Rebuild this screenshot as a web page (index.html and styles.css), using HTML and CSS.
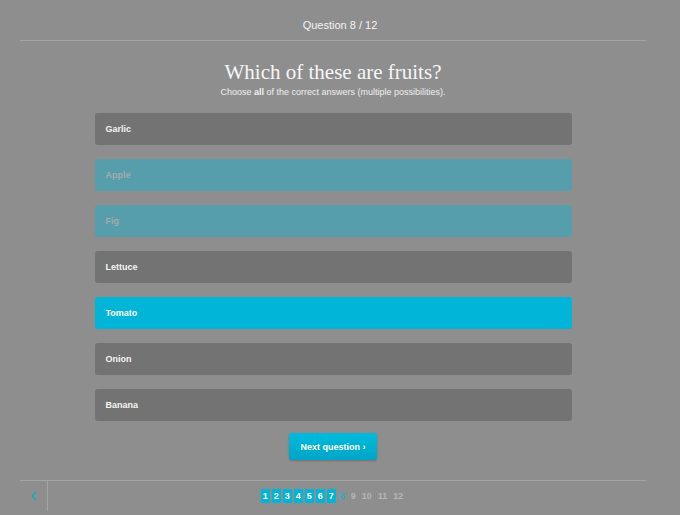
FILE: index.html
```html
<!DOCTYPE html>
<html lang="en">
<head>
<meta charset="UTF-8">
<meta name="viewport" content="width=device-width, initial-scale=1.0">
<title>Quiz - Question 8 / 12</title>
<link rel="stylesheet" href="styles.css">
</head>
<body>
<header class="top">Question 8 / 12</header>

<div class="page">
    <main class="question">
        <h1>Which of these are fruits?</h1>
        <p class="hint">Choose <b>all</b> of the correct answers (multiple possibilities).</p>

        <ul class="answers">
            <li class="answer">Garlic</li>
            <li class="answer answer-faded">Apple</li>
            <li class="answer answer-faded">Fig</li>
            <li class="answer">Lettuce</li>
            <li class="answer answer-active">Tomato</li>
            <li class="answer">Onion</li>
            <li class="answer">Banana</li>
        </ul>

        <button class="next">Next question ›</button>
    </main>

    <!-- Paginacion -->
    <footer class="pager">
        <a href="#" class="prev">
            <svg width="6" height="10" viewBox="0 0 6 10"><path d="M4.5 1 L1.5 5 L4.5 9" fill="none" stroke="#15a9cc" stroke-width="1.6"/></svg>
        </a>
        <div class="pages">
            <span class="num done">1</span>
            <span class="num done">2</span>
            <span class="num done">3</span>
            <span class="num done">4</span>
            <span class="num done">5</span>
            <span class="num done">6</span>
            <span class="num done">7</span>
            <span class="num current">8</span>
            <span class="num">9</span>
            <span class="num">10</span>
            <span class="num">11</span>
            <span class="num">12</span>
        </div>
        <span></span>
    </footer>
</div>
</body>
</html>
```

FILE: styles.css
```css
body {
    margin: 0;
    background: #8e8e8e;
    font-family: "Liberation Sans", Arial, sans-serif;
    color: #fff;
}

/* Cabecera */
.top {
    padding: 19px 0 8px;
    line-height: 13px;
    font-size: 11px;
    text-align: center;
    color: #f4f4f4;
}

.page {
    width: 666px;
    padding: 0 20px;
    box-sizing: border-box;
}

.question {
    border-top: 1px solid #a4a4a4;
    display: flex;
    flex-direction: column;
    align-items: center;
}

.question h1 {
    margin: 19px 0 0;
    font-family: "Liberation Serif", "Times New Roman", serif;
    font-weight: normal;
    font-size: 21px;
    line-height: 24px;
    color: #f6f6f6;
}

.hint {
    margin: 3px 0 0;
    font-size: 9px;
    line-height: 11px;
    color: #f0f0f0;
}

/* Respuestas */
.answers {
    list-style: none;
    margin: 15px 0 0;
    padding: 0;
    width: 477px;
    display: flex;
    flex-direction: column;
    gap: 14px;
}

.answer {
    height: 32px;
    padding-left: 11px;
    display: flex;
    align-items: center;
    background: #737373;
    border-radius: 3px;
    font-size: 9px;
    font-weight: bold;
    color: #f5f5f5;
}

.answer-faded {
    background: #569eab;
    color: #a5abad;
}

.answer-active {
    background: #00b5d7;
    color: #fff;
}

.next {
    margin-top: 12px;
    width: 88px;
    height: 27px;
    border: none;
    border-radius: 2px;
    background: linear-gradient(#00bbde, #00a5c6);
    box-shadow: 0 1px 2px rgba(0, 0, 0, 0.2);
    font-family: "Liberation Sans", Arial, sans-serif;
    font-size: 9px;
    font-weight: bold;
    color: #fff;
    cursor: pointer;
}

/* Paginacion */
.pager {
    margin-top: 20px;
    border-top: 1px solid #a4a4a4;
    height: 30px;
    display: grid;
    grid-template-columns: 28px 1fr 28px;
}

.prev {
    border-right: 1px solid #a4a4a4;
    display: flex;
    align-items: center;
    justify-content: center;
}

.pages {
    display: flex;
    justify-content: center;
    align-items: center;
    gap: 2px;
}

.num {
    min-width: 5px;
    padding: 0 2px;
    height: 14px;
    line-height: 14px;
    text-align: center;
    font-size: 9px;
    font-weight: bold;
    color: #b6b6b6;
}

.num.done {
    background: #00b5d7;
    color: #fff;
}

.num.current {
    color: #1fb1d2;
}
```
